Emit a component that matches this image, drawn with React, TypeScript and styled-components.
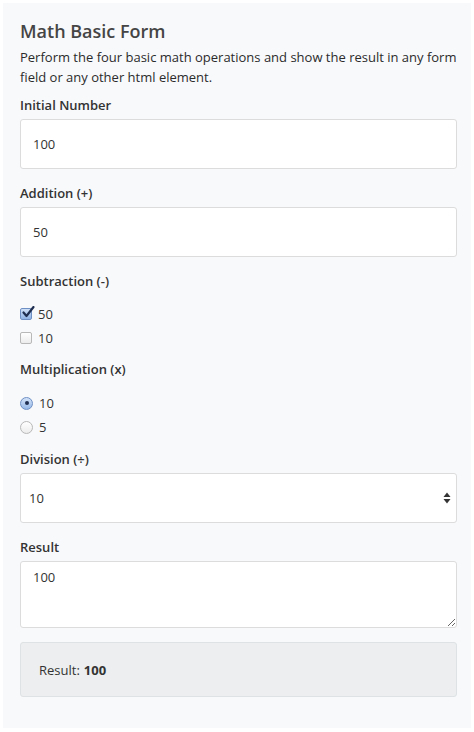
import { FC } from 'react';
import styled, { createGlobalStyle } from 'styled-components';

const GlobalStyle = createGlobalStyle`
	html, body {
		margin: 0;
		padding: 0;
		background: #ffffff;
	}
	body {
		font-family: 'Open Sans', 'Liberation Sans', sans-serif;
		font-size: 13px;
		color: #333333;
	}
	* {
		box-sizing: border-box;
	}
`;

const subtractionOptions = [
	{ value: 50, checked: true },
	{ value: 10, checked: false },
];

const multiplicationOptions = [
	{ value: 10, checked: true },
	{ value: 5, checked: false },
];

const CheckMark: FC = () => (
	<svg width="14" height="14" viewBox="0 0 14 14">
		<path d="M2.5 6.5 L5.5 10 L12.5 1" fill="none" stroke="#1f2f52" strokeWidth="2.2" strokeLinecap="round" strokeLinejoin="round" />
	</svg>
);

const SelectArrows: FC = () => (
	<svg width="8" height="12" viewBox="0 0 8 12">
		<path d="M4 0.5 L7.5 5 L0.5 5 Z" fill="#333" />
		<path d="M4 11.5 L7.5 7 L0.5 7 Z" fill="#333" />
	</svg>
);

const App: FC = () => {
	return (
		<>
			<GlobalStyle />
			<Panel>
				<Title>Math Basic Form</Title>
				<Description>
					Perform the four basic math operations and show the result in any form field or any other html
					element.
				</Description>

				<FormGroup>
					<Label>Initial Number</Label>
					<TextInput type="text" defaultValue="100" />
				</FormGroup>

				<FormGroup>
					<Label>Addition (+)</Label>
					<TextInput type="text" defaultValue="50" />
				</FormGroup>

				<FormGroup spacing={11}>
					<Label>Subtraction (-)</Label>
					<ChoiceList offset={9}>
						{subtractionOptions.map(({ value, checked }) => (
							<ChoiceRow key={value}>
								<CheckBox checked={checked}>{checked && <CheckMark />}</CheckBox>
								{value}
							</ChoiceRow>
						))}
					</ChoiceList>
				</FormGroup>

				<FormGroup spacing={12}>
					<Label>Multiplication (x)</Label>
					<ChoiceList offset={10}>
						{multiplicationOptions.map(({ value, checked }) => (
							<ChoiceRow key={value}>
								<Radio checked={checked}>{checked && <RadioDot />}</Radio>
								{value}
							</ChoiceRow>
						))}
					</ChoiceList>
				</FormGroup>

				<FormGroup>
					<Label>Division (÷)</Label>
					<SelectWrap>
						<Select defaultValue="10">
							<option value="10">10</option>
							<option value="5">5</option>
							<option value="2">2</option>
						</Select>
						<ArrowIcon>
							<SelectArrows />
						</ArrowIcon>
					</SelectWrap>
				</FormGroup>

				<FormGroup>
					<Label>Result</Label>
					<TextArea defaultValue="100" />
				</FormGroup>

				<ResultAlert>
					Result: <strong>100</strong>
				</ResultAlert>
			</Panel>
		</>
	);
};

const Panel = styled.div`
	margin: 3px 3px 4px 3px;
	padding: 16px 14px 28px 17px;
	background: #f8f9fb;
	min-height: 725px;
`;

const Title = styled.h2`
	margin: 0;
	font-family: 'Open Sans', 'Liberation Sans', sans-serif;
	font-size: 18px;
	font-weight: 600;
	line-height: 24px;
	color: #454545;
`;

const Description = styled.p`
	margin: 5px 0 8px 0;
	font-size: 13px;
	line-height: 19.5px;
	color: #2b2b2b;
`;

const FormGroup = styled.div<{ spacing?: number }>`
	display: flex;
	flex-direction: column;
	margin-bottom: ${(p) => p.spacing ?? 14}px;
`;

const Label = styled.label`
	font-size: 13px;
	font-weight: 600;
	line-height: 20px;
	color: #333;
	margin-bottom: 4px;
`;

const TextInput = styled.input`
	width: 100%;
	height: 50px;
	padding: 0 12px;
	font-family: 'Open Sans', 'Liberation Sans', sans-serif;
	font-size: 13px;
	color: #333;
	background: #fff;
	border: 1px solid #dcdcdc;
	border-radius: 3px;
	outline: none;
`;

const ChoiceList = styled.div<{ offset: number }>`
	display: flex;
	flex-direction: column;
	gap: 4px;
	margin-top: ${(p) => p.offset}px;
`;

const ChoiceRow = styled.div`
	display: flex;
	align-items: center;
	gap: 6px;
	height: 20px;
	font-size: 13px;
	color: #333;
`;

const CheckBox = styled.span<{ checked: boolean }>`
	position: relative;
	width: 12px;
	height: 12px;
	border-radius: 2px;
	border: 1px solid ${(p) => (p.checked ? '#6e8fc4' : '#b8b8b8')};
	background: ${(p) =>
		p.checked ? 'linear-gradient(#cfe0f7, #8fb3e6)' : 'linear-gradient(#ffffff, #ececec)'};
	display: inline-flex;

	svg {
		position: absolute;
		left: 0px;
		top: -3px;
	}
`;

const Radio = styled.span<{ checked: boolean }>`
	width: 13px;
	height: 13px;
	border-radius: 50%;
	border: 1px solid ${(p) => (p.checked ? '#6e8fc4' : '#b8b8b8')};
	background: ${(p) =>
		p.checked ? 'linear-gradient(#d3e3f8, #96b8e8)' : 'linear-gradient(#ffffff, #ececec)'};
	display: inline-flex;
	align-items: center;
	justify-content: center;
`;

const RadioDot = styled.span`
	width: 4px;
	height: 4px;
	border-radius: 50%;
	background: #1f2f52;
`;

const SelectWrap = styled.div`
	position: relative;
`;

const Select = styled.select`
	width: 100%;
	height: 50px;
	padding: 0 8px;
	appearance: none;
	font-family: 'Open Sans', 'Liberation Sans', sans-serif;
	font-size: 13px;
	color: #333;
	background: #fff;
	border: 1px solid #dcdcdc;
	border-radius: 3px;
	outline: none;
`;

const ArrowIcon = styled.span`
	position: absolute;
	right: 6px;
	top: 19px;
	pointer-events: none;
	display: flex;
`;

const TextArea = styled.textarea`
	width: 100%;
	height: 67px;
	padding: 6px 12px;
	font-family: 'Open Sans', 'Liberation Sans', sans-serif;
	font-size: 13px;
	line-height: 19px;
	color: #333;
	background: #fff;
	border: 1px solid #dcdcdc;
	border-radius: 3px;
	outline: none;
	resize: vertical;
`;

const ResultAlert = styled.div`
	margin-top: 3px;
	height: 55px;
	display: flex;
	align-items: center;
	padding: 0 18px;
	background: #eceeef;
	border: 1px solid #dfe2e4;
	border-radius: 3px;
	font-size: 13px;
	color: #333;

	strong {
		font-weight: 700;
		margin-left: 4px;
	}
`;

export default App;
